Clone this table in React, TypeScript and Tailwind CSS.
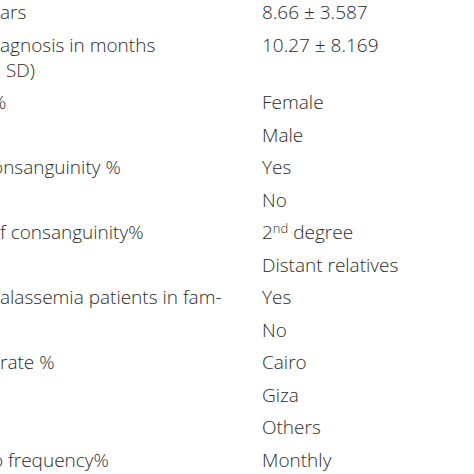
import React from "react";

type Row = { left?: React.ReactNode; right?: React.ReactNode };

const rows: Row[] = [
  { left: <span>ars</span>, right: "8.66 ± 3.587" },
  {
    left: (
      <>
        <span className="block">agnosis in months</span>
        <span className="block pl-[6px]">SD)</span>
      </>
    ),
    right: "10.27 ± 8.169",
  },
  { left: <span className="-ml-[9px]">%</span>, right: "Female" },
  { right: "Male" },
  { left: <span className="-ml-[8px]">onsanguinity %</span>, right: "Yes" },
  { right: "No" },
  {
    left: <span>f consanguinity%</span>,
    right: (
      <span>
        2<sup className="text-[13px] leading-none">nd</sup> degree
      </span>
    ),
  },
  { right: "Distant relatives" },
  { left: <span>alassemia patients in fam-</span>, right: "Yes" },
  { right: "No" },
  { left: <span>rate %</span>, right: "Cairo" },
  { right: "Giza" },
  { right: "Others" },
  { left: <span className="-ml-[8px]">o frequency%</span>, right: "Monthly" },
];

export default function App() {
  return (
    <div
      className="w-[474px] h-[474px] overflow-hidden bg-white text-[#2b2b2b] font-light text-[19px] leading-[25px]"
      style={{ fontFamily: '"Open Sans", "Liberation Sans", sans-serif' }}
    >
      <div className="grid grid-cols-[262px_1fr] gap-y-[7.5px]">
        {rows.map((r, i) => (
          <React.Fragment key={i}>
            <div className="overflow-hidden whitespace-nowrap">{r.left}</div>
            <div className="whitespace-nowrap">{r.right}</div>
          </React.Fragment>
        ))}
      </div>
    </div>
  );
}
